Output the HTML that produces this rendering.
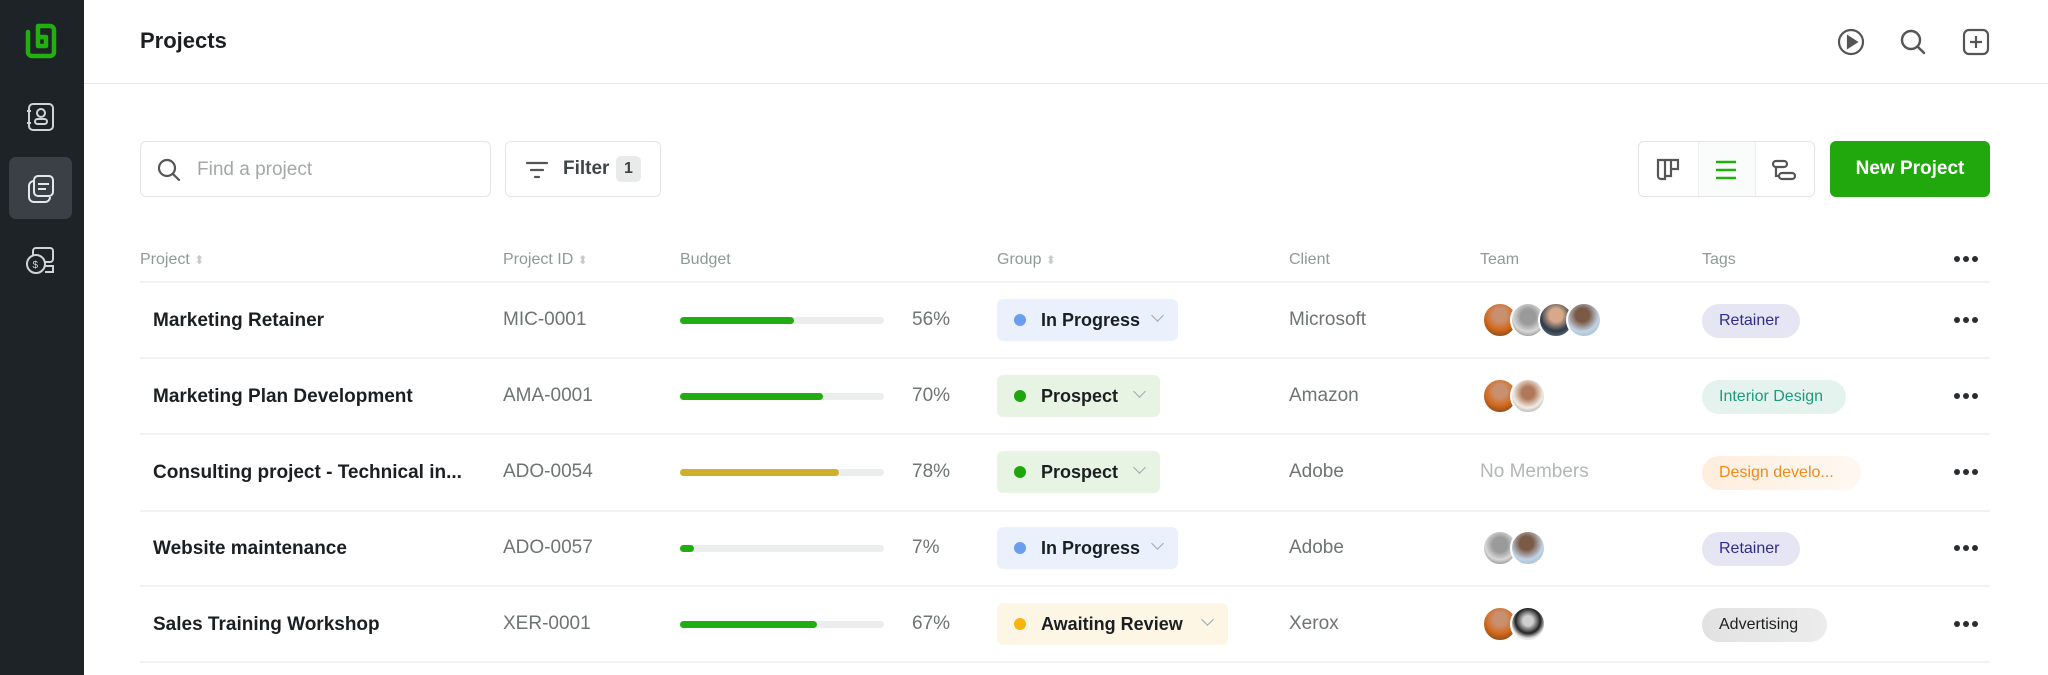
<!DOCTYPE html>
<html><head><meta charset="utf-8"><style>
*{box-sizing:border-box;margin:0;padding:0}
body{width:2048px;height:675px;overflow:hidden;background:#fff;font-family:"Liberation Sans",sans-serif;position:relative;color:#1b1f22}
.sb{position:absolute;left:0;top:0;width:84px;height:675px;background:#1e2328}
.abs{position:absolute}
.hdr{position:absolute;left:84px;top:0;right:0;height:84px;border-bottom:1px solid #e6e8e8}
.title{position:absolute;left:140px;top:28px;font-size:22px;font-weight:bold}
.box{position:absolute;border:1px solid #e3e5e5;border-radius:6px;background:#fff}
.th{position:absolute;top:251px;font-size:16px;color:#8f9a96}
.th s{text-decoration:none;font-size:12px;color:#c5cbc9}
.line{position:absolute;left:140px;width:1850px;height:2px;background:#f1f2f2}
.cell{position:absolute;font-size:19px;transform:translateY(-50%)}
.name{font-weight:bold;color:#1b1f22;font-size:19px}
.gray{color:#6e7472}
.bar{position:absolute;left:680px;width:204px;height:7px;border-radius:4px;background:#eceded;margin-top:-3px}
.bar i{display:block;height:7px;border-radius:4px}
.pill{position:absolute;left:997px;height:42px;border-radius:6px;margin-top:-21px;font-size:18px;font-weight:bold;display:flex;align-items:center;padding-left:44px}
.pill .d{position:absolute;left:17px;top:15px;width:12px;height:12px;border-radius:50%}
.pill .c{position:absolute;right:16px;top:12px;width:9px;height:9px;border-right:1.5px solid #9aa;border-bottom:1.5px solid #9aa;transform:rotate(45deg)}
.tag{position:absolute;left:1702px;height:34px;margin-top:-17px;border-radius:17px;font-size:16px;display:flex;align-items:center;padding-left:17px;white-space:nowrap}
.av{position:absolute;width:36px;height:36px;border-radius:50%;border:2px solid #fff;margin-top:-18px}
.dots{position:absolute;left:1954px;margin-top:-3px;display:flex;gap:3px}
.dots b{width:6px;height:6px;border-radius:50%;background:#2a2d30;display:block}
</style></head><body>
<div class="sb">
<svg class="abs" style="left:22px;top:22px" width="36" height="38" viewBox="0 0 36 38"><path d="M6 10 V30 a4 4 0 0 0 4 4 H28 a4 4 0 0 0 4-4 V8 a4 4 0 0 0-4-4 H16 V24 H24 V15 H18" fill="none" stroke="#21b00e" stroke-width="4.5" stroke-linejoin="round" stroke-linecap="round"/></svg>
<svg class="abs" style="left:26px;top:102px" width="30" height="30" viewBox="0 0 30 30" fill="none" stroke="#d0d4d6" stroke-width="2"><rect x="3" y="2" width="24" height="26" rx="4"/><circle cx="15" cy="11" r="4"/><rect x="9" y="17" width="12" height="5" rx="2.5"/><path d="M1 9h4M1 21h4"/></svg>
<div class="abs" style="left:9px;top:157px;width:63px;height:62px;border-radius:7px;background:#3a4045"></div>
<svg class="abs" style="left:26px;top:174px" width="30" height="30" viewBox="0 0 30 30" fill="none" stroke="#e5e8ea" stroke-width="2"><rect x="8" y="2" width="19" height="20" rx="4"/><path d="M8 7 a5 5 0 0 0-5 5v11a5 5 0 0 0 5 5h11a5 5 0 0 0 5-5"/><path d="M12 10h11M12 15h8"/></svg>
<svg class="abs" style="left:24px;top:246px" width="32" height="30" viewBox="0 0 32 30" fill="none" stroke="#d0d4d6" stroke-width="2"><rect x="9" y="2" width="20" height="14" rx="3"/><circle cx="12" cy="18" r="9" fill="#1e2328"/><path d="M21 20h8v6h-8"/><text x="8.5" y="22" font-size="10" fill="#d0d4d6" stroke="none" font-family="Liberation Sans">$</text></svg>
</div>
<div class="hdr"></div>
<div class="title">Projects</div>
<svg class="abs" style="left:1837px;top:28px" width="28" height="28" viewBox="0 0 28 28" fill="none" stroke="#555" stroke-width="2.2"><circle cx="14" cy="14" r="12"/><path d="M11 8.5v11l8.5-5.5z" fill="#555"/></svg>
<svg class="abs" style="left:1899px;top:28px" width="28" height="28" viewBox="0 0 28 28" fill="none" stroke="#555" stroke-width="2.4"><circle cx="12" cy="12" r="9"/><path d="M19 19l6 6" stroke-linecap="round"/></svg>
<svg class="abs" style="left:1962px;top:28px" width="28" height="28" viewBox="0 0 28 28" fill="none" stroke="#555" stroke-width="2.2"><rect x="2" y="2" width="24" height="24" rx="5"/><path d="M14 8v12M8 14h12"/></svg>

<div class="box" style="left:140px;top:141px;width:351px;height:56px"></div>
<svg class="abs" style="left:156px;top:157px" width="26" height="26" viewBox="0 0 26 26" fill="none" stroke="#555" stroke-width="2.2"><circle cx="11" cy="11" r="8"/><path d="M17 17l6 6" stroke-linecap="round"/></svg>
<div class="abs" style="left:197px;top:159px;font-size:19px;color:#a3a8a7">Find a project</div>
<div class="box" style="left:505px;top:141px;width:156px;height:56px"></div>
<svg class="abs" style="left:525px;top:159px" width="24" height="22" viewBox="0 0 24 22" stroke="#555" stroke-width="2.2" stroke-linecap="round"><path d="M2 4h20M6 11h12M10 18h4"/></svg>
<div class="abs" style="left:563px;top:158px;font-size:19px;font-weight:bold;color:#3e4346">Filter</div>
<div class="abs" style="left:616px;top:156px;width:25px;height:26px;border-radius:5px;background:#e9ebeb;font-size:16px;font-weight:bold;color:#3e4346;text-align:center;line-height:26px">1</div>

<div class="box" style="left:1638px;top:141px;width:177px;height:56px;overflow:hidden">
<div class="abs" style="left:59px;top:0;width:58px;height:56px;background:#fafbfb;border-left:1px solid #eceeee;border-right:1px solid #eceeee"></div>
</div>
<svg class="abs" style="left:1655px;top:158px" width="26" height="24" viewBox="0 0 26 24" fill="none" stroke="#555" stroke-width="2.2"><path d="M3 2h7v19h-4a3 3 0 0 1-3-3zM10 2h6v16h-6M16 2h7v9h-7"/></svg>
<svg class="abs" style="left:1713px;top:158px" width="26" height="24" viewBox="0 0 26 24" stroke="#21b00e" stroke-width="2.4"><path d="M3 4h20M3 12h20M3 20h20"/></svg>
<svg class="abs" style="left:1770px;top:158px" width="28" height="24" viewBox="0 0 28 24" fill="none" stroke="#555" stroke-width="2.2"><rect x="3" y="3" width="14" height="6" rx="3"/><rect x="9" y="15" width="16" height="6" rx="3"/><path d="M6 9v9h3"/></svg>
<div class="abs" style="left:1830px;top:141px;width:160px;height:56px;border-radius:6px;background:#21a80c;color:#fff;font-size:19px;font-weight:bold;text-align:center;line-height:56px">New Project</div>

<div class="th" style="left:140px">Project <s>⬍</s></div>
<div class="th" style="left:503px">Project ID <s>⬍</s></div>
<div class="th" style="left:680px">Budget</div>
<div class="th" style="left:997px">Group <s>⬍</s></div>
<div class="th" style="left:1289px">Client</div>
<div class="th" style="left:1480px">Team</div>
<div class="th" style="left:1702px">Tags</div>
<div class="dots" style="top:259px"><b></b><b></b><b></b></div>
<div class="line" style="top:281px"></div>
<div class="line" style="top:357px"></div>
<div class="line" style="top:433px"></div>
<div class="line" style="top:510px"></div>
<div class="line" style="top:585px"></div>
<div class="line" style="top:661px"></div>

<div class="cell name" style="left:153px;top:321px">Marketing Retainer</div>
<div class="cell gray" style="left:503px;top:320px">MIC-0001</div>
<div class="bar" style="top:320px"><i style="width:114px;background:#21ad0f"></i></div>
<div class="cell gray" style="left:912px;top:320px">56%</div>
<div class="pill" style="top:320px;width:181px;background:#eaf1fd"><span class="d" style="background:#6a9df0"></span>In Progress<span class="c"></span></div>
<div class="cell gray" style="left:1289px;top:320px">Microsoft</div>
<div class="av" style="left:1482px;top:320px;background:radial-gradient(circle at 50% 35%,#c99070 25%,#d46a1c 55%,#5a3a20)"></div>
<div class="av" style="left:1510px;top:320px;background:radial-gradient(circle at 50% 40%,#9a9a9a 30%,#d8d8d8 60%,#555)"></div>
<div class="av" style="left:1538px;top:320px;background:radial-gradient(circle at 50% 35%,#d7a98a 25%,#2d3b4a 60%,#7c8b90)"></div>
<div class="av" style="left:1566px;top:320px;background:radial-gradient(circle at 45% 35%,#7a5a45 25%,#c2d3e6 60%,#8fb0c8)"></div>
<div class="tag" style="top:321px;width:98px;background:#e6e5f3;color:#2f2d8a">Retainer</div>
<div class="dots" style="top:320px"><b></b><b></b><b></b></div>

<div class="cell name" style="left:153px;top:397px">Marketing Plan Development</div>
<div class="cell gray" style="left:503px;top:396px">AMA-0001</div>
<div class="bar" style="top:396px"><i style="width:143px;background:#21ad0f"></i></div>
<div class="cell gray" style="left:912px;top:396px">70%</div>
<div class="pill" style="top:396px;width:163px;background:#e7f3e3"><span class="d" style="background:#1fa60e"></span>Prospect<span class="c"></span></div>
<div class="cell gray" style="left:1289px;top:396px">Amazon</div>
<div class="av" style="left:1482px;top:396px;background:radial-gradient(circle at 50% 35%,#c99070 25%,#d46a1c 55%,#5a3a20)"></div>
<div class="av" style="left:1510px;top:396px;background:radial-gradient(circle at 50% 40%,#b07a5a 25%,#f2ece6 60%,#777)"></div>
<div class="tag" style="top:397px;width:144px;background:#e5f3ef;color:#1c9a7c">Interior Design</div>
<div class="dots" style="top:396px"><b></b><b></b><b></b></div>

<div class="cell name" style="left:153px;top:473px">Consulting project - Technical in...</div>
<div class="cell gray" style="left:503px;top:472px">ADO-0054</div>
<div class="bar" style="top:472px"><i style="width:159px;background:#cfb02a"></i></div>
<div class="cell gray" style="left:912px;top:472px">78%</div>
<div class="pill" style="top:472px;width:163px;background:#e7f3e3"><span class="d" style="background:#1fa60e"></span>Prospect<span class="c"></span></div>
<div class="cell gray" style="left:1289px;top:472px">Adobe</div>
<div class="cell" style="left:1480px;top:472px;color:#b3b7b6">No Members</div>
<div class="tag" style="top:473px;width:159px;background:linear-gradient(90deg,#fdeedd,#fff8f2);color:#f08a1c">Design develo...</div>
<div class="dots" style="top:472px"><b></b><b></b><b></b></div>

<div class="cell name" style="left:153px;top:549px">Website maintenance</div>
<div class="cell gray" style="left:503px;top:548px">ADO-0057</div>
<div class="bar" style="top:548px"><i style="width:14px;background:#21ad0f"></i></div>
<div class="cell gray" style="left:912px;top:548px">7%</div>
<div class="pill" style="top:548px;width:181px;background:#eaf1fd"><span class="d" style="background:#6a9df0"></span>In Progress<span class="c"></span></div>
<div class="cell gray" style="left:1289px;top:548px">Adobe</div>
<div class="av" style="left:1482px;top:548px;background:radial-gradient(circle at 50% 40%,#9a9a9a 30%,#d8d8d8 60%,#555)"></div>
<div class="av" style="left:1510px;top:548px;background:radial-gradient(circle at 45% 35%,#7a5a45 25%,#c2d3e6 60%,#8fb0c8)"></div>
<div class="tag" style="top:549px;width:98px;background:#e6e5f3;color:#2f2d8a">Retainer</div>
<div class="dots" style="top:548px"><b></b><b></b><b></b></div>

<div class="cell name" style="left:153px;top:625px">Sales Training Workshop</div>
<div class="cell gray" style="left:503px;top:624px">XER-0001</div>
<div class="bar" style="top:624px"><i style="width:137px;background:#21ad0f"></i></div>
<div class="cell gray" style="left:912px;top:624px">67%</div>
<div class="pill" style="top:624px;width:231px;background:#fdf6e4"><span class="d" style="background:#f7b50f"></span>Awaiting Review<span class="c"></span></div>
<div class="cell gray" style="left:1289px;top:624px">Xerox</div>
<div class="av" style="left:1482px;top:624px;background:radial-gradient(circle at 50% 35%,#c99070 25%,#d46a1c 55%,#5a3a20)"></div>
<div class="av" style="left:1510px;top:624px;background:radial-gradient(circle at 50% 40%,#cfcfcf 20%,#222 50%,#e6e6e6 70%)"></div>
<div class="tag" style="top:625px;width:125px;background:linear-gradient(90deg,#e2e2e2,#ececec);color:#1b1f22">Advertising</div>
<div class="dots" style="top:624px"><b></b><b></b><b></b></div>
</body></html>
